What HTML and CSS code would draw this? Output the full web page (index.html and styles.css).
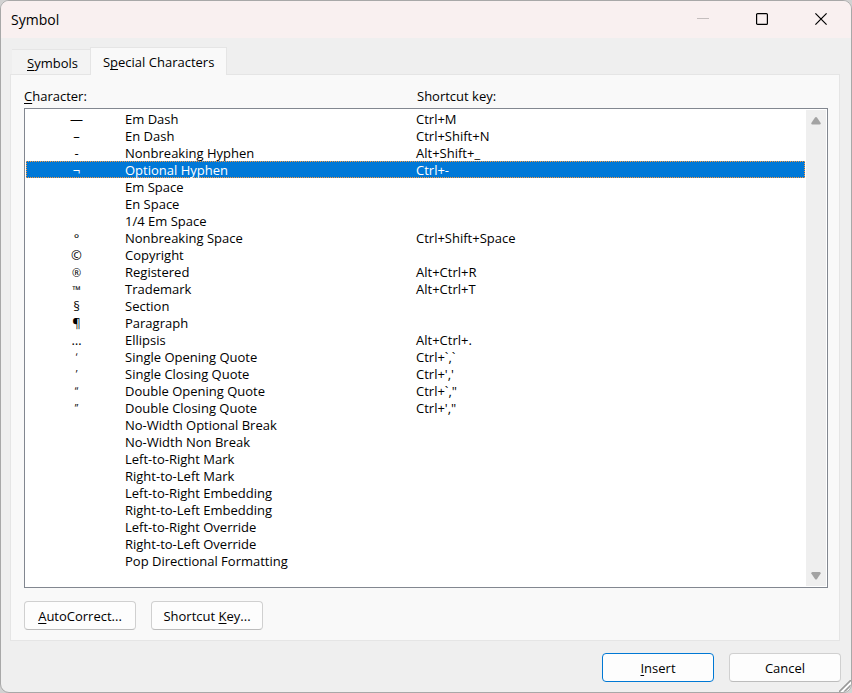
FILE: index.html
```html
<!DOCTYPE html>
<html lang="en">
<head>
<meta charset="utf-8">
<title>Symbol</title>
<link rel="stylesheet" href="styles.css">
</head>
<body>
<main class="dialog" role="dialog" aria-labelledby="title">
  <header class="titlebar">
    <h1 id="title">Symbol</h1>
    <div class="window-controls">
      <button type="button" aria-label="Minimize" disabled><svg width="12" height="12" viewBox="0 0 12 12"><path d="M0 5.5h12" stroke="#c4bebe"/></svg></button>
      <button type="button" aria-label="Maximize"><svg width="12" height="12" viewBox="0 0 12 12"><rect x=".6" y=".6" width="10.8" height="10.8" rx="1" fill="none" stroke="#000" stroke-width="1.2"/></svg></button>
      <button type="button" aria-label="Close"><svg width="12" height="12" viewBox="0 0 12 12"><path d="M.4.4l11.2 11.2M11.6.4L.4 11.6" stroke="#000" stroke-width="1.2"/></svg></button>
    </div>
  </header>
  <div class="tabs" role="tablist">
    <button type="button" class="tab" role="tab"><span><u>S</u>ymbols</span></button>
    <button type="button" class="tab active" role="tab" aria-selected="true"><span>S<u>p</u>ecial Characters</span></button>
  </div>
  <section class="panel" role="tabpanel">
    <div class="headings">
      <span id="char-label"><u>C</u>haracter:</span>
      <span>Shortcut key:</span>
    </div>
    <div class="listbox">
      <div class="rows">
        <table aria-labelledby="char-label">
          <tbody>
            <tr><td>—</td><td>Em Dash</td><td>Ctrl+M</td></tr>
            <tr><td>–</td><td>En Dash</td><td>Ctrl+Shift+N</td></tr>
            <tr><td>-</td><td>Nonbreaking Hyphen</td><td>Alt+Shift+_</td></tr>
            <tr class="selected"><td>¬</td><td>Optional Hyphen</td><td>Ctrl+-</td></tr>
            <tr><td></td><td>Em Space</td><td></td></tr>
            <tr><td></td><td>En Space</td><td></td></tr>
            <tr><td></td><td>1/4 Em Space</td><td></td></tr>
            <tr><td>°</td><td>Nonbreaking Space</td><td>Ctrl+Shift+Space</td></tr>
            <tr><td>©</td><td>Copyright</td><td></td></tr>
            <tr><td class="small">®</td><td>Registered</td><td>Alt+Ctrl+R</td></tr>
            <tr><td class="small">™</td><td>Trademark</td><td>Alt+Ctrl+T</td></tr>
            <tr><td>§</td><td>Section</td><td></td></tr>
            <tr><td>¶</td><td>Paragraph</td><td></td></tr>
            <tr><td>…</td><td>Ellipsis</td><td>Alt+Ctrl+.</td></tr>
            <tr><td class="quote">‘</td><td>Single Opening Quote</td><td>Ctrl+`,`</td></tr>
            <tr><td class="quote">’</td><td>Single Closing Quote</td><td>Ctrl+','</td></tr>
            <tr><td class="quote">“</td><td>Double Opening Quote</td><td>Ctrl+`,"</td></tr>
            <tr><td class="quote">”</td><td>Double Closing Quote</td><td>Ctrl+',"</td></tr>
            <tr><td></td><td>No-Width Optional Break</td><td></td></tr>
            <tr><td></td><td>No-Width Non Break</td><td></td></tr>
            <tr><td></td><td>Left-to-Right Mark</td><td></td></tr>
            <tr><td></td><td>Right-to-Left Mark</td><td></td></tr>
            <tr><td></td><td>Left-to-Right Embedding</td><td></td></tr>
            <tr><td></td><td>Right-to-Left Embedding</td><td></td></tr>
            <tr><td></td><td>Left-to-Right Override</td><td></td></tr>
            <tr><td></td><td>Right-to-Left Override</td><td></td></tr>
            <tr><td></td><td>Pop Directional Formatting</td><td></td></tr>
          </tbody>
        </table>
      </div>
      <div class="scrollbar">
        <button type="button" aria-label="Scroll up" disabled><svg width="10" height="8" viewBox="0 0 10 8"><path d="M4 .6Q5-.4 6 .6L9.7 6Q10 7.6 8.6 7.6H1.4Q0 7.6.3 6z" fill="#a3a3a3"/></svg></button>
        <button type="button" aria-label="Scroll down" disabled><svg width="10" height="8" viewBox="0 0 10 8"><path d="M4 7Q5 8 6 7L9.7 1.6Q10 0 8.6 0H1.4Q0 0 .3 1.6z" fill="#a3a3a3"/></svg></button>
      </div>
    </div>
    <div class="panel-actions">
      <button type="button" class="btn"><span><u>A</u>utoCorrect...</span></button>
      <button type="button" class="btn"><span>Shortcut <u>K</u>ey...</span></button>
    </div>
  </section>
  <footer class="footer">
    <button type="button" class="btn default"><span><u>I</u>nsert</span></button>
    <button type="button" class="btn">Cancel</button>
  </footer>
  <svg class="grip" width="12" height="12" viewBox="0 0 12 12"><path d="M0 12L12 0V12z" fill="#fff"/><path d="M0 12L12 0M5 12l7-7" stroke="#9a9a9a" stroke-width="1.6"/></svg>
</main>
</body>
</html>
```
FILE: styles.css
```css
* {
  box-sizing: border-box;
}

body {
  margin: 0;
  background: #d2d2d2;
  color: #000;
  font: 13px/17px "Open Sans", "Noto Sans", sans-serif;
}

button {
  font: inherit;
  color: inherit;
  padding: 0;
  border: 0;
  background: none;
}

u {
  text-decoration: underline;
  text-decoration-skip-ink: none;
  text-underline-offset: 2px;
}

.dialog {
  position: relative;
  display: flex;
  flex-direction: column;
  min-height: 100vh;
  border: 1px solid #a8a8a8;
  border-radius: 9px;
  background: #efefef;
  overflow: hidden;
}

.titlebar {
  display: flex;
  justify-content: space-between;
  align-items: center;
  height: 37px;
  padding-left: 10px;
  background: #f9f0f0;
}

.titlebar h1 {
  margin: 0;
  font-size: 14px;
  font-weight: 400;
}

.window-controls {
  display: flex;
  height: 36px;
  align-self: flex-start;
  padding-right: 1px;
}

.window-controls button {
  display: grid;
  place-items: center;
  width: 59px;
}

.tabs {
  display: flex;
  align-items: flex-end;
  height: 36px;
  padding: 0 11px;
}

.tab {
  height: 25px;
  padding: 2px 12px 0 15px;
  border-top: 1px solid #e5e5e5;
  background: #f3f3f3;
}

.tab.active {
  z-index: 1;
  height: 28px;
  margin-bottom: -1px;
  padding: 2px 12px 0;
  border: 1px solid #e5e5e5;
  border-bottom: 0;
  background: #f9f9f9;
}

.panel {
  flex: 1;
  display: flex;
  flex-direction: column;
  margin: 0 11px 0 9px;
  padding: 13px 11px 10px 13px;
  border: 1px solid #e5e5e5;
  background: #f9f9f9;
}

.headings {
  display: grid;
  grid-template-columns: 393px 1fr;
  margin-bottom: 3px;
}

.listbox {
  flex: 1;
  display: flex;
  gap: 1px;
  padding: 1px;
  border: 1px solid #828790;
  background: #fff;
}

.rows {
  flex: 1;
}

table {
  width: 100%;
  table-layout: fixed;
  border-collapse: collapse;
}

td {
  height: 17px;
  padding: 2px 0 0;
  line-height: 15px;
  white-space: pre;
}

td:nth-child(1) {
  width: 99px;
  padding-left: 2px;
  text-align: center;
}

td:nth-child(2) {
  width: 291px;
}

.small {
  font-size: 11px;
}

.quote {
  font-size: 10px;
}

/* Dotted focus frame on the selected row */
.selected {
  --dots: #ff9a3c 0 1px, #0078d7 1px 2px;
  background:
    repeating-linear-gradient(90deg, var(--dots)) top / 100% 1px no-repeat,
    repeating-linear-gradient(90deg, var(--dots)) bottom / 100% 1px no-repeat,
    repeating-linear-gradient(var(--dots)) left / 1px 100% no-repeat,
    repeating-linear-gradient(var(--dots)) right / 1px 100% no-repeat,
    #0078d7;
  color: #fff;
}

.scrollbar {
  display: flex;
  flex-direction: column;
  justify-content: space-between;
  width: 20px;
  background: #efefef;
}

.scrollbar button {
  display: grid;
  place-items: center;
  height: 21px;
}

.panel-actions {
  display: flex;
  gap: 15px;
  padding-top: 13px;
}

.btn {
  width: 112px;
  height: 29px;
  padding-top: 2px;
  border: 1px solid #d0d0d0;
  border-bottom-color: #bcbcbc;
  border-radius: 4px;
  background: #fdfdfd;
}

.btn.default {
  border-color: #0078d4;
}

.footer {
  display: flex;
  justify-content: flex-end;
  gap: 15px;
  padding: 12px 10px 10px;
}

.grip {
  position: absolute;
  right: 0;
  bottom: 0;
}
```
